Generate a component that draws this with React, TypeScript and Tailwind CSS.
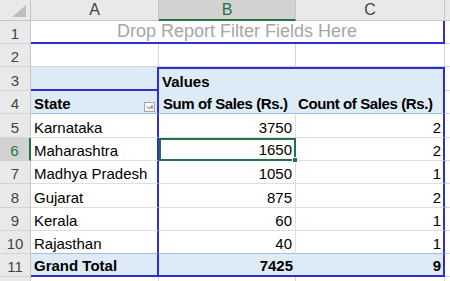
import React from "react";

const BLUE = "border-[#2e2ed6]";

function RowHead({ n, sel }: { n: string; sel?: boolean }) {
  return (
    <div
      className={
        "flex items-end justify-center pb-[1px] leading-[17px] text-[15px] border-b border-b-[#d4d4d4] " +
        (sel
          ? "bg-[#d2d2d2] text-[#217346] border-r-2 border-r-[#217346]"
          : "bg-[#e9e9e9] text-[#444444] border-r border-r-[#c6c6c6]")
      }
    >
      {n}
    </div>
  );
}

function FilterBtn() {
  return (
    <svg width="11" height="10" viewBox="0 0 11 10" className="absolute right-[2px] bottom-[1px]">
      <rect x="0.5" y="0.5" width="10" height="9" fill="#f7f7f7" stroke="#a6a6a6" />
      <path d="M3 4.5 L5 6.5 L7 4.5" fill="none" stroke="#555" strokeWidth="1" />
      <path d="M8 3 L8 7" stroke="#555" strokeWidth="1" />
    </svg>
  );
}

const data: [string, string, string][] = [
  ["Karnataka", "3750", "2"],
  ["Maharashtra", "1650", "2"],
  ["Madhya Pradesh", "1050", "1"],
  ["Gujarat", "875", "2"],
  ["Kerala", "60", "1"],
  ["Rajasthan", "40", "1"],
];

export default function App() {
  const cell = "flex items-end pb-[1px] leading-[17px] text-[15px] text-black";
  return (
    <div
      className="w-[450px] h-[281px] overflow-hidden bg-white grid grid-cols-[31px_128px_137px_149px_1fr] grid-rows-[21px_23px_23px_24px_23px_24px_23px_23px_24px_23px_23px_23px_1fr]"
      style={{ fontFamily: '"Liberation Sans", Arial, sans-serif' }}
    >
      {/* header row */}
      <div className="relative bg-[#e9e9e9] border-r border-b border-[#c6c6c6]">
        <svg width="16" height="14" viewBox="0 0 16 14" className="absolute right-[3px] bottom-[2px]">
          <path d="M15 1 L15 13 L1 13 Z" fill="#bdbdbd" />
        </svg>
      </div>
      <div className="flex items-center justify-center bg-[#e9e9e9] border-r border-b border-[#c6c6c6] text-[16px] text-[#444444]">A</div>
      <div className="flex items-center justify-center bg-[#d2d2d2] border-r border-r-[#c6c6c6] border-b-2 border-b-[#217346] text-[16px] text-[#217346]">B</div>
      <div className="flex items-center justify-center bg-[#e9e9e9] border-r border-b border-[#c6c6c6] text-[16px] text-[#444444]">C</div>
      <div className="bg-[#e9e9e9] border-b border-[#c6c6c6]" />

      {/* row 1 */}
      <RowHead n="1" />
      <div className={`col-span-3 flex items-center justify-center border-b-2 border-r-2 ${BLUE} text-[18px] text-[#a6a6a6]`}>
        Drop Report Filter Fields Here
      </div>
      <div className="border-b border-[#d4d4d4]" />

      {/* row 2 */}
      <RowHead n="2" />
      <div className="border-r border-b border-[#d4d4d4]" />
      <div className="border-r border-b border-[#d4d4d4]" />
      <div className="border-r border-b border-[#d4d4d4]" />
      <div className="border-b border-[#d4d4d4]" />

      {/* row 3 */}
      <RowHead n="3" />
      <div className={`bg-[#ddebf7] border-b-2 border-r-2 ${BLUE}`} />
      <div className={`col-span-2 ${cell} pl-[3px] font-bold text-[14px] bg-[#ddebf7] border-t-2 border-r-2 ${BLUE}`}>Values</div>
      <div className="border-b border-[#d4d4d4]" />

      {/* row 4 */}
      <RowHead n="4" />
      <div className={`relative ${cell} pl-[3px] font-bold text-[14px] bg-[#ddebf7] border-b border-b-[#9bc2e6] border-r-2 border-r-[#2e2ed6]`}>
        State
        <FilterBtn />
      </div>
      <div className={`${cell} pl-[4px] font-bold text-[14px] tracking-[-0.4px] bg-[#ddebf7] border-b border-b-[#9bc2e6] whitespace-nowrap`}>Sum of Sales (Rs.)</div>
      <div className={`${cell} pl-[2px] font-bold text-[14px] tracking-[-0.4px] bg-[#ddebf7] border-b border-b-[#9bc2e6] border-r-2 border-r-[#2e2ed6] whitespace-nowrap`}>Count of Sales (Rs.)</div>
      <div className="border-b border-[#d4d4d4]" />

      {data.map(([s, v, c], i) => {
        const last = i === data.length - 1;
        const sel = i === 1;
        const bb = last ? "border-b-[#9bc2e6]" : "border-b-[#dedede]";
        return (
          <React.Fragment key={s}>
            <RowHead n={String(i + 5)} sel={sel} />
            <div className={`${cell} pl-[3px] whitespace-nowrap border-b ${bb} border-r-2 border-r-[#2e2ed6]`}>{s}</div>
            {sel ? (
              <div className={`relative ${cell} justify-end pr-[2px] border-2 border-[#217346]`}>
                {v}
                <div className="absolute right-[-4px] bottom-[-4px] w-[6px] h-[6px] bg-[#217346] border border-white" />
              </div>
            ) : (
              <div className={`${cell} justify-end pr-[3px] border-b ${bb} border-r border-r-[#dedede]`}>{v}</div>
            )}
            <div className={`${cell} justify-end pr-[2px] border-b ${bb} border-r-2 border-r-[#2e2ed6]`}>{c}</div>
            <div className="border-b border-[#d4d4d4]" />
          </React.Fragment>
        );
      })}

      {/* row 11 */}
      <RowHead n="11" />
      <div className={`${cell} pl-[3px] font-bold text-[14px] bg-[#ddebf7] border-b-2 border-r-2 ${BLUE}`}>Grand Total</div>
      <div className={`${cell} justify-end pr-[3px] font-bold text-[14px] bg-[#ddebf7] border-b-2 ${BLUE}`}>7425</div>
      <div className={`${cell} justify-end pr-[2px] font-bold text-[14px] bg-[#ddebf7] border-b-2 border-r-2 ${BLUE}`}>9</div>
      <div className="border-b border-[#d4d4d4]" />

      {/* row 12 */}
      <div className="bg-[#e9e9e9] border-r border-[#c6c6c6]" />
      <div className="border-r border-[#d4d4d4]" />
      <div className="border-r border-[#d4d4d4]" />
      <div className="border-r border-[#d4d4d4]" />
      <div />
    </div>
  );
}
